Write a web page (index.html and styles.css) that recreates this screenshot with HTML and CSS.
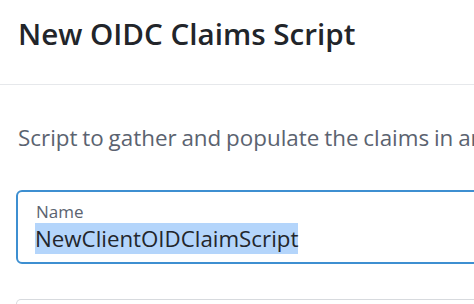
FILE: index.html
```html
<!DOCTYPE html>
<html>
<head>
<meta charset="utf-8">
<link rel="stylesheet" href="styles.css">
</head>
<body>
<header class="page-header">
  <h1 class="title">New OIDC Claims Script</h1>
</header>
<main class="content">
  <p class="description">Script to gather and populate the claims in an ID token for OIDC clients.</p>
  <div class="field field-focused">
    <label class="field-label">Name</label>
    <div class="field-value"><span class="selected">NewClientOIDClaimScript</span></div>
  </div>
  <div class="field field-next"></div>
</main>
</body>
</html>
```
FILE: styles.css
```css
html, body {
  margin: 0;
  padding: 0;
  background: #ffffff;
  width: 474px;
  height: 304px;
  overflow: hidden;
  font-family: "Open Sans", "Noto Sans", sans-serif;
}
.page-header {
  height: 85px;
  border-bottom: 1px solid #e6e8eb;
  padding-left: 18px;
  box-sizing: border-box;
  display: flex;
  align-items: flex-start;
}
.title {
  margin: 14px 0 0 0;
  font-size: 29.6px;
  font-weight: 600;
  color: #22252a;
  line-height: 40px;
  white-space: nowrap;
}
.content {
  padding-left: 16px;
  overflow: hidden;
  white-space: nowrap;
}
.description {
  margin: 0;
  padding: 37px 0 0 2px;
  font-size: 22.4px;
  word-spacing: -1px;
  line-height: 32px;
  color: #5b6370;
  overflow: hidden;
}
.field {
  margin-top: 36px;
  width: 480px;
  border-radius: 6px;
  box-sizing: border-box;
}
.field-focused {
  height: 74px;
  border: 2px solid #3d8fd1;
  padding: 10px 0 0 18px;
}
.field-label {
  display: block;
  font-size: 17px;
  line-height: 20px;
  color: #5b6370;
}
.field-value {
  font-size: 22.3px;
  line-height: 30px;
  color: #23262b;
  margin-top: 2px;
  margin-left: -1px;
}
.selected {
  background: #b4d5fb;
}
.field-next {
  margin-top: 35px;
  height: 5px;
  border: 1px solid #d7dade;
  border-bottom: none;
  border-radius: 6px 6px 0 0;
}
```
